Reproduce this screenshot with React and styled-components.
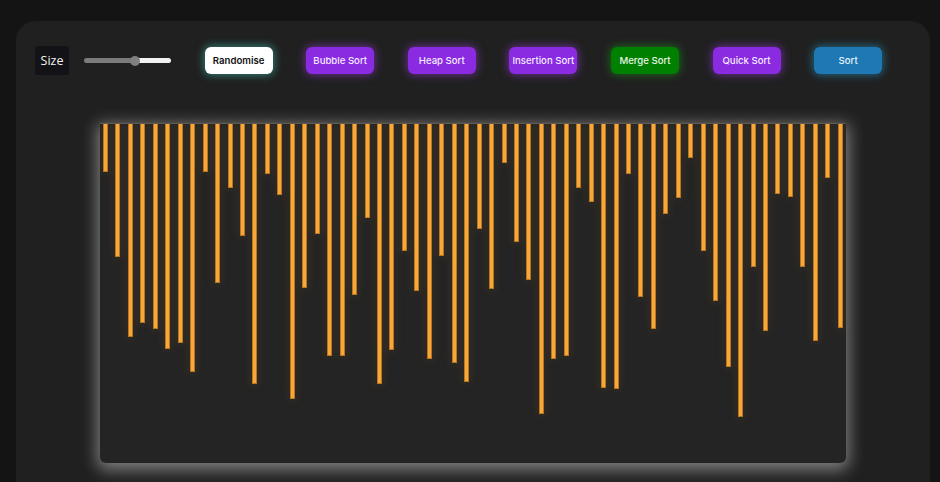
import React, { Component } from 'react';
import styled, { createGlobalStyle } from 'styled-components'

const GlobalStyle = createGlobalStyle`
    body {
        margin: 0;
        background: #141414;
        font-family: "Open Sans", "Liberation Sans", sans-serif;
        overflow: hidden;
    }
`

const Page = styled.div`
    padding: 21px 10px 0 16px;
`

const Card = styled.div`
    background: #202020;
    border-radius: 20px 20px 0 0;
    height: 461px;
    box-sizing: border-box;
    padding: 25px 0 0 19px;
`

const Toolbar = styled.div`
    display: flex;
    align-items: center;
    gap: 33.6px;
    height: 29px;
`

const SizeGroup = styled.div`
    display: flex;
    align-items: center;
    gap: 15px;
`

const SizeLabel = styled.div`
    width: 34px;
    height: 29px;
    background: #121217;
    border-radius: 3px;
    color: #f2f2f2;
    font-size: 12.5px;
    display: flex;
    align-items: center;
    justify-content: center;
`

const Slider = styled.input`
    -webkit-appearance: none;
    appearance: none;
    width: 87px;
    height: 5px;
    margin: 0;
    border-radius: 3px;
    background: linear-gradient(to right, #7b7b7b 0%, #7b7b7b ${props => props.fill}%, #f2f2f2 ${props => props.fill}%, #f2f2f2 100%);
    outline: none;
    &::-webkit-slider-thumb {
        -webkit-appearance: none;
        width: 10px;
        height: 10px;
        border-radius: 50%;
        background: #808080;
        cursor: pointer;
    }
`

const colors = {
    white: { bg: '#ffffff', fg: '#111111', glow: 'rgba(70, 210, 190, 0.55)' },
    purple: { bg: '#8a2be2', fg: '#f4ecff', glow: 'rgba(160, 60, 230, 0.55)' },
    green: { bg: '#008000', fg: '#e8f6e8', glow: 'rgba(30, 170, 30, 0.5)' },
    blue: { bg: '#1d78b4', fg: '#e6f2fb', glow: 'rgba(40, 160, 210, 0.55)' }
}

const Button = styled.button`
    width: 68px;
    height: 27px;
    border: none;
    border-radius: 6px;
    padding: 0;
    background: ${props => colors[props.kind].bg};
    color: ${props => colors[props.kind].fg};
    box-shadow: 0 0 9px 1px ${props => colors[props.kind].glow};
    font-family: "Inter", "Liberation Sans", sans-serif;
    font-size: 9.6px;
    font-weight: ${props => props.kind === 'white' ? 600 : 500};
    cursor: pointer;
    white-space: nowrap;
`

const ChartBox = styled.div`
    width: 746px;
    height: 340px;
    margin: 48px 0 0 65px;
    background: #242424;
    border-radius: 0 0 6px 6px;
    border-top: 1px solid #5a5a5a;
    box-shadow: 0 4px 16px 3px rgba(255, 255, 255, 0.42);
    display: flex;
    justify-content: space-between;
    align-items: flex-start;
    padding: 0 3px 0 3px;
    box-sizing: border-box;
`

const Bar = styled.div`
    width: 5px;
    box-sizing: border-box;
    background: #f8a83a;
    border: 1px solid #b9761f;
    border-top: none;
    box-shadow: 0 0 10px 2px rgba(248, 168, 58, 0.08);
`

// bottom edge of each bar, in page pixels
const bottoms = [
    172, 257, 337, 323, 329, 349, 343, 372, 172, 283,
    188, 236, 384, 174, 195, 399, 288, 234, 356, 356,
    295, 218, 384, 350, 251, 291, 359, 256, 363, 382,
    229, 289, 163, 242, 280, 414, 359, 356, 188, 202,
    388, 389, 174, 297, 329, 214, 198, 158, 251, 301,
    367, 417, 267, 331, 194, 197, 267, 341, 178, 328
]

class App extends Component {

    state = {
        size: 64,
        bars: bottoms.map(b => b - 124)
    }

    handleSizeChange = (event) => {
        this.setState({ size: Number(event.target.value) })
    }

    render() {
        const fill = ((this.state.size - 10) / 90) * 100
        return (
            <Page>
                <GlobalStyle />
                <Card>
                    <Toolbar>
                        <SizeGroup>
                            <SizeLabel>Size</SizeLabel>
                            <Slider type="range" min="10" max="100" value={this.state.size} fill={fill} onChange={this.handleSizeChange} />
                        </SizeGroup>
                        <Button kind="white">Randomise</Button>
                        <Button kind="purple">Bubble Sort</Button>
                        <Button kind="purple">Heap Sort</Button>
                        <Button kind="purple">Insertion Sort</Button>
                        <Button kind="green">Merge Sort</Button>
                        <Button kind="purple">Quick Sort</Button>
                        <Button kind="blue">Sort</Button>
                    </Toolbar>
                    <ChartBox>
                        {this.state.bars.map((h, i) => (
                            <Bar key={i} style={{ height: h }} />
                        ))}
                    </ChartBox>
                </Card>
            </Page>
        );
    }
}

export default App;
